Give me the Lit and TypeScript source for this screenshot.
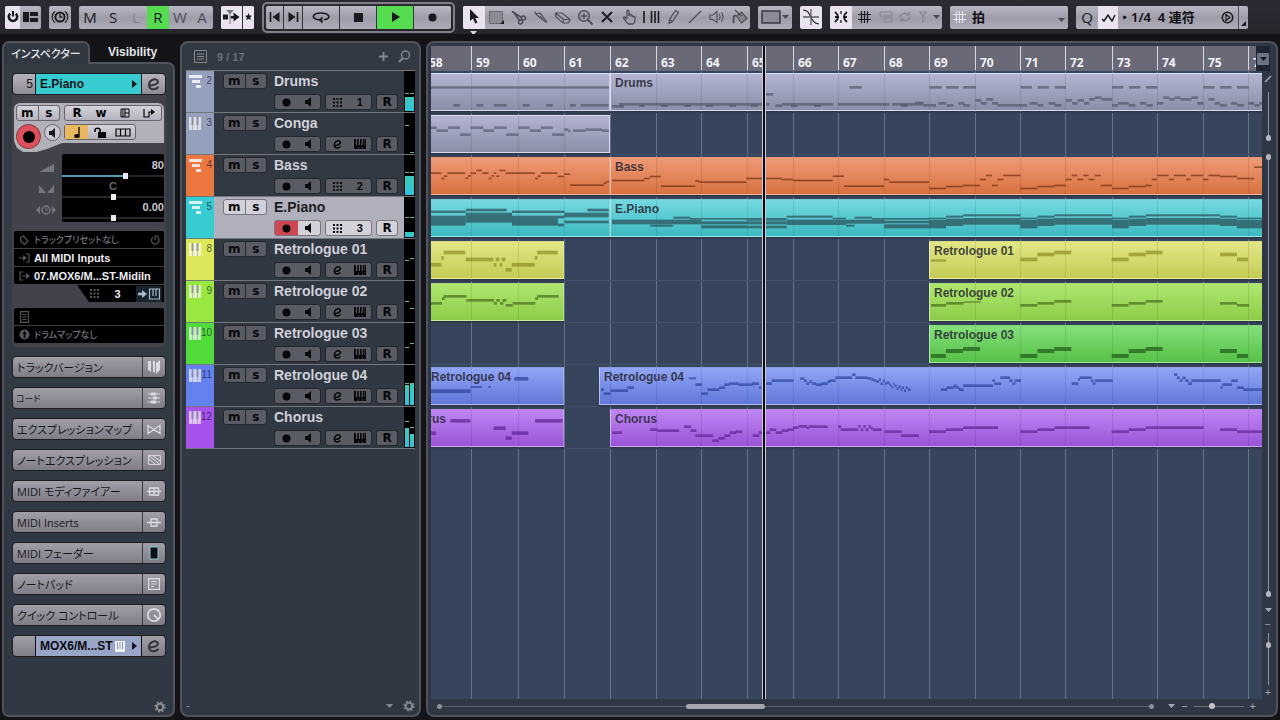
import { LitElement, html, svg, css, nothing } from "lit";
import { customElement } from "lit/decorators.js";
import { classMap } from "lit/directives/class-map.js";

/* ---------- icons ---------- */

const icon = (w: number, h: number, body: unknown) =>
  html`<svg width=${w} height=${h} viewBox="0 0 ${w} ${h}" aria-hidden="true">${body}</svg>`;

const line = (d: string, sw = 1.5, color = "currentColor") =>
  svg`<path d=${d} fill="none" stroke=${color} stroke-width=${sw} />`;
const solid = (d: string, color = "currentColor") => svg`<path d=${d} fill=${color} />`;

const icons = {
  power: icon(14, 14, [line("M4.2 3.6a4.2 4.2 0 1 0 5.600 0", 2.6), line("M7 1v5.500", 2.2)]),
  layout: icon(16, 12, [solid("M0 1h6v10H0zM7 1h8v4H7zM7 7h8v4H7z")]),
  clock: icon(18, 16, [
    svg`<circle cx="9" cy="8" r="4.600" fill="none" stroke="currentColor" stroke-width="2"/>`,
    line("M9 5v3h2.4", 1.3),
    line("M4 2.2a7.5 7.5 0 0 0 0 11.6M14 2.2a7.5 7.5 0 0 1 0 11.6", 1.1),
  ]),
  autoScroll: icon(18, 16, [
    solid("M0 5.500h5v5H0zM7.500 7h3V3.500l6 4.500l-6 4.500V9.500h-3z"),
    solid("M3 1h8L7 5z", "#77757f"),
    line("M7 2v13", 1, "#77757f"),
  ]),
  star: icon(7, 8, [solid("M3.500 0l1 2.600 2.500.2-1.900 1.700.7 2.700-2.300-1.500-2.300 1.500.7-2.700L0 2.800l2.500-.2z")]),
  prev: icon(12, 10, [line("M1.500 0v10", 1.6), solid("M10.500 0v10L3.500 5z")]),
  next: icon(12, 10, [line("M10.500 0v10", 1.6), solid("M1.500 0v10L8.500 5z")]),
  cycle: icon(18, 13, [line("M7 8.800C-1.500 8 0 2 9 2s10.500 6 3 6.800", 1.6), solid("M10.500 5.500v7L6 9z")]),
  stop: icon(9, 9, [solid("M0 0h9v9H0z")]),
  play: icon(9, 10, [solid("M1 0l8 5-8 5z")]),
  record: icon(9, 9, [svg`<circle cx="4.500" cy="4.500" r="4" fill="currentColor"/>`]),
  arrow: icon(12, 16, [solid("M2 0v12l3-2.500 2.200 5L9.500 13.500 7.300 9H11z")]),
  range: icon(17, 15, [
    svg`<rect x="1.500" y="1.500" width="13" height="12" fill="#8b8a95" stroke="#55535d" stroke-dasharray="2 1"/>`,
    solid("M16 10v4h-4z"),
  ]),
  scissors: icon(16, 16, [
    line("M1 2.500l9.500 6M2 2.500l6.500 9", 1.5),
    svg`<circle cx="12.500" cy="9" r="2" fill="none" stroke="currentColor" stroke-width="1.400"/>`,
    svg`<circle cx="9.500" cy="13" r="2" fill="none" stroke="currentColor" stroke-width="1.400"/>`,
  ]),
  glue: icon(16, 16, [line("M1.500 2.500l2 3.500M4 4.500l3-.5 7 9.500-4-2.500-6-5z", 1.2), line("M7 7l3.500 4", 1)]),
  eraser: icon(18, 15, [line("M1.500 3h6.500l8 6.500-1.500 3.500H9L1.500 6.500zM1.500 3l8 6.500 6.500 0M9.500 9.500L9 13", 1.1)]),
  zoom: icon(17, 17, [
    svg`<circle cx="7" cy="7" r="5.200" fill="none" stroke="currentColor" stroke-width="1.500"/>`,
    line("M4 7h6M7 4v6", 1.3),
    line("M11 11l4.500 4.500", 2),
  ]),
  mute: icon(14, 14, [line("M2 2l10 10M12 2L2 12", 1.8)]),
  hand: icon(15, 16, [
    line("M5 9V2.200c0-1.500 2-1.500 2 0V7M7 7V5.500c1-1 2-.5 2 .5v1.500M9 7c1-1 2-.5 2 .5v1M11 8c1-1 2.200-.5 2.200.5 0 3-.700 6-2.200 6.500H6.500C5 14 3.500 11.500 1.500 9c0-1.500 1.500-1.500 3.500 1", 1.3),
  ]),
  warp: icon(18, 14, [line("M2 1v12M9.500 1v12M13 1v12M16.500 1v12", 1.6)]),
  pencil: icon(13, 16, [line("M2 14.500l.5-4L8.500 1.500l3 1.800L5.500 12.500zM2.500 10.500l3 2", 1.2)]),
  lineTool: icon(14, 14, [line("M1 13L13 1", 1.3)]),
  speakerWave: icon(16, 14, [
    line("M1 5h3l4-3.500v11L4 9.500H1z", 1.1),
    line("M10 4c1.500 2 1.500 4 0 6M12.500 2.500c2 3 2 6 0 9", 1.1),
  ]),
  bucket: icon(17, 16, [
    solid("M6 7l5-4 5 6-5 5z", "#85838e"),
    line("M5.500 7L10.500 3l5.500 6.500-5.500 4.500zM4 1l6.500 6", 1.2),
    solid("M2 7c3-3 4-1 1.500 2v5c-1 1-2 0-2-1z"),
  ]),
  swatch: icon(20, 14, [svg`<rect x="1" y="1" width="18" height="12" fill="#8b8a96" stroke="#35343d" stroke-width="1.400"/>`]),
  caret: icon(7, 5, [solid("M0 0h7L3.500 4z")]),
  crossfade: icon(18, 18, [line("M1 2c9 0 6 13 16 14", 1.1), line("M1 9h16", 1), line("M9 1v16", 1.4, "#67656f")]),
  snap: icon(16, 14, [line("M2 2c4 3 4 7 0 10M14 2c-4 3-4 7 0 10M2 7h4M10 7h4", 1.9), line("M8 1v3M8 10v3", 1.3)]),
  hash: icon(13, 12, [line("M3.500 0v12M6.500 0v12M9.500 0v12M0 3.500h13M0 8.500h13", 1.2)]),
  gridRel: icon(14, 12, [line("M1 1h12v4H1zM5 7h8v4H5z", 1)]),
  loop: icon(14, 12, [line("M2 6a5 4 0 0 1 9-2M12 6a5 4 0 0 1-9 2M11 1v3H8M3 11V8h3", 1.1)]),
  pin: icon(10, 12, [line("M1 1h8M2 1l3 4 3-4M5 5v7", 1.2)]),
  wave: icon(15, 9, [line("M1 6l2 2 4-6 4 6 3-6", 1.5)]),
  go: icon(13, 13, [
    svg`<circle cx="6.500" cy="6.500" r="5.200" fill="none" stroke="currentColor" stroke-width="1.500"/>`,
    line("M5 3.500l4 3-4 3z", 1.2),
  ]),
  corner: icon(5, 5, [solid("M5 0v5H0z")]),
  list: icon(13, 13, [line("M.5.5h12v12H.5zM3 4h7M3 6.500h7M3 9h7", 1)]),
  plus: icon(9, 9, [line("M4.500 0v9M0 4.500h9", 1.8)]),
  search: icon(13, 13, [svg`<circle cx="7.500" cy="5" r="4" fill="none" stroke="currentColor" stroke-width="1.500"/>`, line("M5 8l-4 4", 2)]),
  gear: icon(12, 12, [
    svg`<circle cx="6" cy="6" r="3.200" fill="none" stroke="currentColor" stroke-width="2"/>`,
    svg`<circle cx="6" cy="6" r="4.800" fill="none" stroke="currentColor" stroke-width="1.600" stroke-dasharray="1.885 1.885"/>`,
  ]),
  midi: icon(14, 14, [svg`<path d="M0 0h13v3H0zM3 5h8v3H3zM7 10h5v3H7z" fill="#fff" fill-opacity=".8"/>`]),
  keys: icon(12, 14, [
    svg`<path d="M0 0h12v13H0z" fill="#fff" fill-opacity=".66"/>`,
    svg`<path d="M2.500 0h2v8h-2zM7.500 0h2v8h-2zM3.500 8h.6v5h-.6zM8.300 8h.6v5h-.6z" fill="#5d5a78" fill-opacity=".6"/>`,
  ]),
  whiteKeys: icon(10, 11, [
    solid("M0 0h10v11H0z", "#f2f3f8"),
    solid("M2 1h1v7H2zM4.500 1h1v7h-1zM7 1h1v7H7z", "#8c96b0"),
  ]),
  speaker: icon(8, 10, [solid("M0 3h2.500L6 0v10L2.500 7H0z")]),
  dots: icon(9, 9, [solid("M0 0h2v2H0zM3.500 0h2v2h-2zM7 0h2v2H7zM0 3.500h2v2H0zM3.500 3.500h2v2h-2zM7 3.500h2v2H7zM0 7h2v2H0zM3.500 7h2v2h-2zM7 7h2v2H7z")]),
  miniKeys: icon(12, 10, [solid("M0 0h2v6h1.200v-6h1.600v6H6v-6h1.600v6h1.200v-6H10v6h.5v-6H12v10H8.800V8h-.6v2H4.600V8H4v2H0z")]),
  edit: icon(14, 14, [line("M3 8.500C10 8 12 5.500 10.500 3.500 8 .5 2 3.500 2 8c0 5 6 5.500 9.500 2", 2)]),
  editSmall: icon(9, 10, [line("M2 6.500C7 6 8 4 7 2.500 5 .5 1.300 3 1.300 6c0 3.500 4 3.800 6.200 1.500", 1.5)]),
  arrowRight: icon(5, 8, [solid("M0 0l5 4-5 4z")]),
  lanes: icon(10, 10, [line("M1 1h8v8H1zM5 1v8M5 5h4M3 1v8", 1)]),
  out: icon(12, 11, [line("M1 1v8h5V4h4", 1.2), solid("M8 1l4 3-4 3z")]),
  note: icon(8, 13, [line("M6 1v8", 1.3), svg`<ellipse cx="4" cy="10" rx="2.800" ry="2" fill="currentColor"/>`]),
  unlock: icon(14, 11, [solid("M5 5h8v6H5z"), line("M7 5V3c0-2-5-3-5 .5V5", 1.6)]),
  cells: icon(16, 9, [line("M1 1h14v7H1zM5.500 1v7M10.500 1v7", 1.2)]),
  ramp: icon(15, 8, [solid("M0 8L15 0v8z")]),
  pan: icon(15, 8, [solid("M0 0l7 8H0zM15 0v8H8z")]),
  delay: icon(20, 12, [
    solid("M4 2v8L0 6zM16 2v8l4-4z"),
    svg`<circle cx="10" cy="6" r="4" fill="none" stroke="currentColor" stroke-width="1.500"/>`,
    line("M10 3v3h2.500", 1),
  ]),
  tag: icon(10, 10, [line("M4.500 1L9 6 5.500 9.500 1.500 6V2.500z", 1.2)]),
  reset: icon(10, 10, [line("M3 2.200a3.800 3.800 0 1 0 4.500 0M5 5V1h4", 1.2)]),
  inPort: icon(11, 10, [line("M0 5h6M7 1h3v8H7", 1.2), solid("M4 2l4 3-4 3z")]),
  outPort: icon(11, 10, [line("M4 1H1v8h3M3 5h5", 1.2), solid("M7 2l4 3-4 3z")]),
  doc: icon(9, 12, [line("M.6.6h7.800v10.800H.6zM2.500 3.500h4M2.500 6h4M2.500 8.500h4", 1.1)]),
  drum: icon(11, 11, [svg`<circle cx="5.500" cy="5.500" r="5" fill="currentColor"/>`, line("M5.500 3v6", 1.6, "#000"), solid("M3.500 5l2-3 2 3z", "#000")]),
  gotoKeys: icon(22, 12, [
    line("M0 6h5", 2.4),
    solid("M4 2l5 4-5 4z"),
    line("M11.500 1h10v10h-10zM15 1v7M18 1v7", 1.2),
  ]),
  versions: icon(14, 14, [solid("M1 1h3v11l-3-2zM6 1h2v12L6 12zM9 3l4-3v10l-4 4z")]),
  chords: icon(12, 12, [line("M0 2h12M0 6h12M0 10h12", 1), solid("M3 .5h5v3H3zM5 4.500h4v3H5zM3 8.500h5v3H3z")]),
  express: icon(14, 11, [line("M1 1.500l6 4-6 4zM13 1.500v8l-6-4z", 1.3)]),
  noteExp: icon(13, 10, [line("M.6.6h11.800v8.800H.6zM.6.6l11 8.500M5 1l7 5M1 4l6 5", 1)]),
  modifier: icon(14, 9, [line("M0 4.500h14M2.500 1h9v7h-9zM7 1v7", 1.3)]),
  insert: icon(14, 9, [line("M0 4.500h14M4 1h6v7H4z", 1.3)]),
  fader: icon(10, 14, [svg`<rect x="1" y="1" width="8" height="12" fill="#0a1016" stroke="#8fc5d6" stroke-width="1"/>`]),
  pad: icon(12, 12, [line("M.6.6h10.800v10.800H.6zM3 3.500h6M3 6h6M3 8.500h3", 1.2)]),
  knob: icon(16, 16, [svg`<circle cx="8" cy="8" r="6.200" fill="none" stroke="currentColor" stroke-width="1.800"/>`, line("M8 8l4 4", 1.8)]),
  slash: icon(8, 8, [line("M1 7l6-6", 1.4)]),
};

/* ---------- arrangement data ---------- */

interface Clip { from: number; to?: number; label?: string; selected?: boolean }
interface Phrase { x: number; y: number; h: number; notes: string }
interface Track {
  no: number; name: string; color: string; top: string; bottom: string; ink: string;
  kind: "midi" | "keys"; channel?: number; armed?: boolean; clips: Clip[]; phrases: Phrase[];
  meter: number[]; peak: number[];
}

/* Notes are written as start-end@pitch, with an optional *height, on a grid of three steps per pixel. */
const STEPS = 3;
const A = -15;
const B = 1245;

const steps = (starts: number[], a: number, b: number, c: number) =>
  starts.map((s) => `${s}-${s + 51}@${a} ${s + 51}-${s + 102}@${b} ${s + 102}-${s + 153}@${c}`).join(" ");

const BAR_X = [40, 87, 133, 179, 225, 270, 316, 362, 407, 453, 498, 544, 589, 634, 681, 726, 772, 817];

const tracks: Track[] = [
  {
    no: 2, name: "Drums", color: "#95a0bd", top: "#b3b4d0", bottom: "#8990a8", ink: "rgba(74,80,98,.62)", kind: "midi", channel: 1,
    clips: [{ from: -60, to: 179, selected: true }, { from: 179, label: "Drums", selected: true }],
    meter: [14], peak: [18, 18],
    phrases: [
      { x: A, y: 15, h: 8, notes: "15-548@61*7 82-102@114 151-172@114 203-242@114 290-311@114 361-380@114 432-449@114 464-548@114 558-594@117 580-1030@111 640-656@117*6 705-725@117*6 775-795@117*6 840-860@117*6 910-930@117*6 975-995@117*6 1018-1042@81 1048-1068@115 1068-1222@111 1095-1115@117*6 1165-1185@117*6 1235-1260@111" },
      { x: B, y: 15, h: 8, notes: "10-47@60 250-287@60 300-338@60 351-390@60 524-558@60 575-609@60 626-660@60 798-832@60 849-883@60 900-934@60 1072-1106@60 1122-1157@60 1173-1208@60 0-131@111 138-232@111 165-185@115 207-234@107*5 232-270@114 277-300@108 302-322@114 337-355@108 352-372@114 388-406@99 404-422@108 421-441@96 438-456@108 455-543@114 550-575@108 575-592@114 608-628@108 626-646@114 659-678@99 678-695@108 695-714@99 714-729@108 729-747@96 747-767@91 767-798@96 798-816@114 816-848@108 848-868@114 882-900@108 901-920@114 934-952@108 952-970@91 970-986@96 986-1003@91 1003-1036@96 1036-1056@91 1054-1073@108 1087-1106@96 1106-1122@108 1122-1142@114 1155-1174@108 1174-1194@114 1207-1225@108 1225-1240@114 1240-1248@108" },
    ],
  },
  {
    no: 3, name: "Conga", color: "#95a0bd", top: "#b3b4d0", bottom: "#8990a8", ink: "rgba(74,80,98,.58)", kind: "keys",
    clips: [{ from: -60, to: 179, selected: true }], meter: [], peak: [28, 1],
    phrases: [
      { x: A, y: 141, h: 8, notes: "15-32@181 32-66@190 66-102@181 102-134@202 134-172@181 172-204@190 204-242@181 240-277@202 277-311@181 311-345@190 345-380@181 378-415@202 415-427@187 427-434@191 441-478@190 478-528@187 528-548@190" },
    ],
  },
  {
    no: 4, name: "Bass", color: "#ec7740", top: "#ef9a77", bottom: "#d8713f", ink: "rgba(116,50,20,.72)", kind: "midi", channel: 2,
    clips: [{ from: -60, to: 179 }, { from: 179, label: "Bass" }], meter: [19], peak: [23, 23],
    phrases: [
      { x: A, y: 267, h: 5, notes: "15-46@319 47-55@335 54-64@328 64-118@319 119-127@334 126-135@327 134-150@319 151-168@311 169-188@319 188-196@335 196-204@327 203-211@319 211-220@328 220-238@311 239-327@319 327-336@335 335-345@328 345-394@319 395-414@329 414-432@322 432-534@355 533-542@349 541-549@344 558-655@341 654-672@335 671-705@329 705-808@358 808-818@342 817-826@345 826-961@346 961-1067@335 1066-1100@338 1100-1220@341 1220-1254@328 1254-1260@358" },
      { x: B, y: 267, h: 5, notes: "0-114@358 114-129@338 129-249@346 249-300@365 300-351@359 351-402@356 402-420@338 420-438@326 438-455@356 454-472@338 471-523@326 523-574@365 574-625@359 625-659@356 659-677@338 677-694@326 694-712@338 712-728@326 728-746@338 746-764@326 764-798@356 798-848@365 848-899@359 898-917@356 917-933@338 933-968@326 968-984@338 984-1020@326 1020-1034@338 1034-1071@326 1071-1087@338 1087-1122@326 1122-1173@329 1173-1225@335 1225-1248@301" },
    ],
  },
  {
    no: 5, name: "E.Piano", color: "#35cbd1", top: "#74d9e1", bottom: "#3db9c0", ink: "rgba(42,76,84,.7)", kind: "midi", channel: 3, armed: true,
    clips: [{ from: -60, to: 179 }, { from: 179, label: "E.Piano" }], meter: [5], peak: [20, 20],
    phrases: [
      { x: A, y: 393, h: 6, notes: "15-119@434*7 15-119@449*30 120-242@428*8 119-258@440*30 258-415@434*7 258-396@449*30 396-415@449*8 396-414@473*8 415-486@440*14 484-548@428*8 486-548@440*14 415-548@464*8 558-826@461*14 742-793@452 792-826@456*5 673-741@476 826-961@456*5 826-1082@466*9 826-961@478*9 961-1082@456*8 961-1082@479*8 1082-1220@449 1082-1260@461*16 1220-1260@455*5" },
      { x: B, y: 393, h: 6, notes: "0-114@461*12 0-26@476 26-78@452 78-114@456*5 114-249@456*5 114-249@464*8 114-249@475*12 249-300@455*5 249-300@462*25 300-351@449 300-351@458*22 351-523@445 351-523@456*20 523-574@455*5 523-574@462*25 574-625@449 574-625@458*22 625-798@445 625-798@456*20 798-848@455*5 798-848@462*25 848-900@449 848-900@458*22 900-1122@445 900-1122@456*20 1122-1173@449 1122-1173@458*22 1173-1248@455*5 1173-1248@462*25" },
    ],
  },
  {
    no: 8, name: "Retrologue 01", color: "#dce85a", top: "#e2e785", bottom: "#c5cc55", ink: "rgba(132,132,28,.62)", kind: "keys",
    clips: [{ from: -60, to: 133 }, { from: 498, label: "Retrologue 01" }], meter: [], peak: [19, 21],
    phrases: [
      { x: A, y: 9, h: 11, notes: "15-46@81 46-54@60 53-118@44 119-202@65 203-211@81 209-220@65 221-229@81 227-238@65 239-257@96 257-326@81 326-334@60 333-395@44" },
      { x: B, y: 9, h: 11, notes: "255-300@70*7 " + steps([523, 797], 65, 50, 44) + " 1122-1173@50 1173-1206@65" },
    ],
  },
  {
    no: 9, name: "Retrologue 02", color: "#9ae740", top: "#afe670", bottom: "#8dcd47", ink: "rgba(76,116,34,.75)", kind: "keys",
    clips: [{ from: -60, to: 133 }, { from: 498, label: "Retrologue 02" }], meter: [], peak: [20, 13],
    phrases: [
      { x: A, y: 135, h: 8, notes: "15-48@198 48-56@184 53-121@177 121-204@189 203-213@198 211-222@189 222-232@198 229-241@189 239-260@204 260-328@198 327-336@184 333-398@177" },
      { x: B, y: 135, h: 8, notes: "255-300@204 300-353@198 353-405@196*4 " + steps([523, 797], 204, 198, 192) + " 1122-1173@198 1173-1209@204" },
    ],
  },
  {
    no: 10, name: "Retrologue 03", color: "#52dc3c", top: "#84e07b", bottom: "#56c147", ink: "rgba(40,104,32,.8)", kind: "keys",
    clips: [{ from: 498, label: "Retrologue 03" }], meter: [], peak: [16, 20],
    phrases: [
      { x: B, y: 261, h: 12, notes: "255-300@354 300-351@339 351-402@333 " + steps([523, 797], 354, 339, 333) + " 1122-1173@339 1173-1206@354" },
    ],
  },
  {
    no: 11, name: "Retrologue 04", color: "#6381ef", top: "#91a5f5", bottom: "#6177d8", ink: "rgba(46,70,158,.72)", kind: "keys",
    clips: [{ from: -5, to: 133, label: "Retrologue 04" }, { from: 168, label: "Retrologue 04" }], meter: [20, 21], peak: [22, 22],
    phrases: [
      { x: A, y: 387, h: 8, notes: "15-134@460*11 134-168@450*6 187-194@450*6 265-307@423*11 525-534@457 533-553@469 553-606@460 604-624@451 788-810@424*6 808-828@442 826-846@469 844-880@457 879-897@451 895-910@442 909-937@439 937-980@442 978-999@439 999-1006@451 1009-1038@439 1037-1102@430 1123-1135@424 1134-1142@430 1141-1150@439 1150-1158@433 1158-1170@439 1169-1188@442 1187-1205@439 1204-1212@433 1211-1229@430 1228-1260@421" },
      { x: B, y: 387, h: 8, notes: "0-18@421 18-29@412 28-64@421 64-76@423 76-84@427 84-92@430 92-99@433 99-105@427 104-112@439 112-117@430 117-122@439 122-130@436 130-136@442 136-142@450 142-146@440 146-152@446 152-158@454 158-164@448 164-169@457 169-174@451 174-180@460 180-186@451 186-194@457 285-303@457 302-325@451 323-333@446 331-340@451 339-353@457 351-441@445 439-447@430 445-465@439 463-492@421 490-500@430 499-508@439 506-525@430 677-697@439 696-702@427 701-737@421 735-743@430 740-748@439 747-800@430 984-994@412 993-1001@421 1001-1009@430 1009-1019@422 1018-1028@430 1026-1038@439 1036-1124@430 1123-1130@451 1129-1158@442 1156-1175@430 1173-1194@451 1192-1248@457" },
    ],
  },
  {
    no: 12, name: "Chorus", color: "#a553ec", top: "#bf85f4", bottom: "#9a54d6", ink: "rgba(96,36,148,.7)", kind: "keys",
    clips: [{ from: -32, to: 133, label: "Chorus" }, { from: 179, label: "Chorus" }], meter: [19, 13], peak: [26, 20],
    phrases: [
      { x: A, y: 513, h: 11, notes: "15-30@586 73-133@549 203-239@571 239-257@601 257-307@586 327-410@549" },
      { x: A, y: 513, h: 8, notes: "558-588@586 672-694@577 694-759@580 774-795@568 793-811@580 808-861@595 859-879@610 877-897@603 895-913@595 911-931@586 929-949@583 980-1000@595 998-1012@586 1012-1033@586 1031-1051@577 1049-1069@586 1067-1087@580 1085-1103@577 1101-1118@571 1118-1142@567 1142-1150@571 1150-1158@567 1158-1205@568 1236-1246@568 1244-1260@577" },
      { x: B, y: 513, h: 8, notes: "0-37@577 37-44@567 44-52@577 52-59@567 59-67@577 67-74@567 74-80@573 80-107@577 115-167@583 165-219@595 249-300@583 300-351@577 351-456@571 523-574@583 574-626@577 626-731@571 797-848@583 848-899@577 899-1074@571 1122-1173@577 1173-1248@583" },
    ],
  },
];

const drawNotes = (p: Phrase) =>
  [...p.notes.matchAll(/(\d+)-(\d+)@(\d+)(?:\*(\d+))?/g)].map(
    ([, a, b, y, h]) =>
      svg`<rect x=${+a + p.x} y=${+y - p.y} width=${+b - +a} height=${h ? +h : p.h} />`,
  );

/* ---------- toolbar ---------- */

@customElement("daw-toolbar")
class DawToolbar extends LitElement {
  static styles = css`
    :host { display: flex; align-items: center; gap: 8px; height: 34px; padding: 0 5px; background: linear-gradient(#2c2b34, #26252c);
      font: 15px "Open Sans", "Noto Sans CJK JP", sans-serif; color: #1b1a20; overflow: hidden; }
    .group { display: flex; flex: none; height: 23px; border-radius: 2px; overflow: hidden; background: linear-gradient(#bab8c4, #9e9ca9 50%, #aeacb9); }
    button { display: flex; align-items: center; justify-content: center; padding: 0; border: 0; background: none; font: inherit; color: inherit; width: 22px; flex: none; }
    .w15 { width: 15px; } .w18 { width: 18px; } .w11 { width: 11px; } .w37 { width: 37px; }
    .w20 { width: 20px; } .w21 { width: 21px; } .w19 { width: 19px; } .w17 { width: 17px; } .w24 { width: 24px; }
    .on { background: #e8e3ee; }
    .go { background: #54db50; }
    .faint { color: #85838f; }
    .soft { color: #4e4c57; }
    .edge { border-right: 1px solid #33323a; }
    .transport { display: flex; flex: none; padding: 2px; border: 2px solid #7f7e88; border-radius: 5px; }
    .tools { position: relative; flex: none; }
    .marker { position: absolute; left: 7px; top: 25px; color: #dcd9e4; display: flex; }
    .tools .wide { width: 23px; }
    .select { align-items: center; gap: 6px; padding: 0 3px; box-sizing: border-box; }
    .select svg { flex: none; }
    select { appearance: none; border: 0; background: none; padding: 0; flex: 1; min-width: 0; font: 700 13px "Noto Sans", "Noto Sans CJK JP", sans-serif; color: #101014; }
    .grow1 { width: 118px; } .grow2 { width: 172px; padding: 0; gap: 0; }
    .grow2 select { font-weight: 600; }
    .grow2 button { height: 23px; }
    .light { color: #e6e2ec; line-height: 0; }
    .colorbox { width: 34px; padding: 0 3px; box-sizing: border-box; align-items: center; }
    .colorbox button { width: auto; gap: 1px; }
    .grow2 .tail { align-items: flex-end; padding-bottom: 3px; width: 10px; border-left: 1px solid #504e58; }
  `;
  render() {
    const b = (label: string, content: unknown, cls = "") =>
      html`<button class=${cls} aria-label=${label}>${content}</button>`;
    return html`
      <div class="group">${b("Activate project", icons.power, "on w15")}${b("Window layout", icons.layout, "w21")}</div>
      <div class="group">${b("Delay compensation", icons.clock)}</div>
      <div class="group">
        ${b("Mute", "M")}${b("Solo", "S", "w24")}${b("Listen", "L", "faint")}${b("Read", "R", "go")}${b("Write", "W", "soft")}${b("Automation", "A", "soft")}
      </div>
      <div class="group">${b("Auto-scroll", icons.autoScroll, "on edge")}${b("Suspend auto-scroll", icons.star, "on w11")}</div>
      <div class="transport"><div class="group">
        ${b("Previous", icons.prev, "w18 edge")}${b("Next", icons.next, "w19 edge")}${b("Cycle", icons.cycle, "w37 edge")}
        ${b("Stop", icons.stop, "w37 edge")}${b("Play", icons.play, "w37 edge go")}${b("Record", icons.record, "w37")}
      </div></div>
      <div class="tools">
        <div class="group">
          ${b("Select", icons.arrow, "on")}${b("Range", icons.range, "wide")}${b("Split", icons.scissors, "soft")}${b("Glue", icons.glue, "soft")}
          ${b("Erase", icons.eraser, "soft")}${b("Zoom", icons.zoom, "soft")}${b("Mute tool", icons.mute)}${b("Comp", icons.hand, "soft")}
          ${b("Time warp", icons.warp)}${b("Draw", icons.pencil, "soft")}${b("Line", icons.lineTool, "soft")}${b("Play tool", icons.speakerWave, "soft")}${b("Color tool", icons.bucket, "soft")}
        </div>
        <span class="marker">${icons.caret}</span>
      </div>
      <div class="group colorbox">${b("Color", html`${icons.swatch}${icons.caret}`, "soft")}</div>
      <div class="group">${b("Crossfade", icons.crossfade, "on")}</div>
      <div class="group">
        ${b("Snap", icons.snap, "on")}${b("Grid", icons.hash, "w24")}${b("Grid relative", icons.gridRel, "faint w19")}${b("Loop", icons.loop, "faint w19")}${b("Pin", icons.pin, "faint w17")}${b("More", icons.caret, "soft w11")}
      </div>
      <label class="group select grow1"><span class="light">${icons.hash}</span><select aria-label="Grid type"><option>拍</option></select><span class="soft">${icons.caret}</span></label>
      <div class="group select grow2">
        ${b("Apply quantize", "Q")}${b("Iterative", icons.wave, "on w20")}
        <select aria-label="Quantize preset"><option>・1/4&nbsp; 4 連符</option></select>
        ${b("Quantize panel", icons.go)}${b("Expand", icons.corner, "tail")}
      </div>`;
  }
}

/* ---------- inspector ---------- */

const sections: [string, unknown, boolean?][] = [
  ["トラックバージョン", icons.versions], ["コード", icons.chords, true], ["エクスプレッションマップ", icons.express],
  ["ノートエクスプレッション", icons.noteExp], ["MIDI モディファイアー", icons.modifier], ["MIDI Inserts", icons.insert],
  ["MIDI フェーダー", icons.fader], ["ノートパッド", icons.pad], ["クイック コントロール", icons.knob],
];

@customElement("daw-inspector")
class DawInspector extends LitElement {
  static styles = css`
    :host { display: flex; flex-direction: column; font: 12px "Open Sans", "Noto Sans CJK JP", sans-serif; color: #17171b; }
    button { font: inherit; color: inherit; border: 0; padding: 0; background: none; display: flex; align-items: center; justify-content: center; }
    .tabs { display: flex; height: 21px; }
    .tab { flex: 1; color: #e4e4ea; font: 700 12px "Liberation Sans", "Noto Sans CJK JP", sans-serif; }
    .tab.active { flex: 0 0 88px; box-sizing: border-box; border: 2px solid #50525c; border-bottom: 0; border-radius: 7px 7px 0 0; background: #323841; height: 23px; padding-bottom: 2px;
      font: 500 11px "Noto Sans CJK JP", sans-serif; font-feature-settings: "palt"; position: relative; z-index: 1; }
    .panel { flex: 1; display: flex; flex-direction: column; border: 2px solid #50525c; border-radius: 0 7px 7px 7px; background: linear-gradient(#343b43, #2f3843); padding: 9px 7px 2px 8px; }
    .bar { display: flex; height: 22px; flex: none; border: 1px solid #1d1d22; border-radius: 4px; overflow: hidden; background: linear-gradient(#a09fa8, #7f7e88); box-sizing: border-box; width: 100%; }
    .title { background: linear-gradient(#b5b4bc, #8e8d97); }
    .num { width: 22px; text-align: right; padding-right: 2px; box-sizing: border-box; font: 12px/20px "Liberation Sans", sans-serif; flex: none; }
    .name { flex: 1; background: #35cbd1; border: 1px solid #111; border-width: 0 1px; display: flex; align-items: center; justify-content: space-between; padding: 0 4px; font: 700 12px "Liberation Sans", sans-serif; }
    .name.out { background: #98a5c7; gap: 2px; }
    .name.out span { white-space: nowrap; color: #0b0b10; }
    .name svg { flex: none; }
    .name.out svg:last-child { margin-left: auto; }
    .edit { width: 23px; color: #34343a; flex: none; }
    .card { background: #42434a; border-radius: 0 0 5px 5px; padding: 8px 2px 4px; display: flex; flex-direction: column; flex: none; }
    .plate { background: #b2b1ba; border-radius: 6px; height: 49px; box-sizing: border-box; padding: 2px; display: grid; grid-template-columns: 44px 1fr; column-gap: 4px; align-content: start; row-gap: 3px;
      clip-path: polygon(0 0, 100% 0, 100% 40px, 32% 40px, 22% 46px, 15% 49px, 6% 49px, 2% 45px, 0 38px); }
    .keys { display: flex; height: 16px; box-sizing: border-box; border: 1px solid #66656e; border-radius: 3px; background: linear-gradient(#d4d3db, #b4b3bd); }
    .keys button { flex: 1; font: 700 12px "DejaVu Sans", sans-serif; color: #060608; }
    .keys button + button.split { border-left: 1px solid #66656e; }
    .short { width: 72px; }
    .keys .gold { background: #eab65e; }
    .round { display: flex; gap: 3px; align-items: flex-start; }
    .rec { width: 25px; height: 25px; border-radius: 50%; background: #df4f5c; border: 1px solid #7d3941; box-sizing: border-box; color: #000; flex: none; }
    .mon { width: 17px; height: 17px; border-radius: 50%; background: #c8c7d0; border: 1px solid #66656e; box-sizing: border-box; flex: none; }
    .faders { display: grid; grid-template-columns: 1fr 102px; margin-top: 2px; }
    .glyphs { display: flex; flex-direction: column; color: #76777e; align-items: flex-end; padding: 3px 6px 0 0; }
    .glyphs span { height: 21px; display: flex; align-items: center; justify-content: center; width: 20px; }
    .screen { background: #000; border-radius: 2px; padding: 4px 0 1px; }
    .screen label { display: block; height: 15px; text-align: right; font: 700 11px/15px "Liberation Sans", sans-serif; color: #c9c9cf; }
    .screen label.mid { text-align: center; color: #66666c; }
    input { appearance: none; display: block; width: 100%; height: 6px; margin: 0; background: linear-gradient(#26282b, #26282b) center / 100% 2px no-repeat; }
    input.vol { background: linear-gradient(90deg, #4f9cb8 62%, #26282b 62%) center / 100% 2px no-repeat; }
    input::-webkit-slider-thumb { appearance: none; width: 5px; height: 6px; background: #eeeef2; }
    .box { background: #000; border-radius: 2px; margin-top: 9px; }
    .line { display: grid; grid-template-columns: 20px 1fr auto; align-items: center; height: 17px; padding-right: 4px; color: #75757b; border-top: 1px solid #3f4046; font: 700 11px "Liberation Sans", "Noto Sans CJK JP", sans-serif; white-space: nowrap; }
    .line:first-child { border-top: 0; }
    .line svg { justify-self: center; color: #55565c; }
    .line.on { color: #ececf0; }
    .line .jp { font-size: 9px; font-weight: 500; font-feature-settings: "palt"; }
    .chan { align-self: flex-end; display: flex; align-items: center; justify-content: space-between; width: 87px; height: 17px; background: #000; clip-path: polygon(0 0, 100% 0, 100% 100%, 12px 100%);
      color: #ececf0; font: 700 11px "Liberation Sans", sans-serif; padding: 0 2px 0 13px; box-sizing: border-box; margin-top: 1px; }
    .chan .grid { color: #55565c; line-height: 0; } .chan .keyb { color: #a9bac6; background: #17242d; padding: 2px; line-height: 0; }
    .box.second { margin-top: 6px; }
    .sections { display: flex; flex-direction: column; gap: 9px; margin-top: 9px; }
    .label { flex: 1; justify-content: flex-start; padding-left: 4px; font: 11px "Open Sans", "Noto Sans CJK JP", sans-serif; font-feature-settings: "palt"; white-space: nowrap; }
    .label.small { font-size: 9px; padding-left: 3px; }
    .side { width: 23px; box-sizing: border-box; border-left: 1px solid #3c3b42; color: #dcdae4; flex: none; }
    .foot { margin-top: auto; display: flex; justify-content: flex-end; color: #8c8d95; }
  `;
  render() {
    return html`
      <div class="tabs" role="tablist">
        <button class="tab active" role="tab">インスペクター</button><button class="tab" role="tab">Visibility</button>
      </div>
      <div class="panel">
        <div class="bar title"><div class="num">5</div><div class="name">E.Piano ${icons.arrowRight}</div><button class="edit" aria-label="Edit instrument">${icons.edit}</button></div>
        <div class="card">
          <div class="plate">
            <div class="keys"><button>m</button><button class="split">s</button></div>
            <div class="keys"><button>R</button><button>w</button><button aria-label="Lanes">${icons.lanes}</button><button aria-label="Direct routing">${icons.out}</button></div>
            <div class="round"><button class="rec" aria-label="Record enable"><svg width="12" height="12" aria-hidden="true"><circle cx="6" cy="6" r="6"/></svg></button><button class="mon" aria-label="Monitor">${icons.speaker}</button></div>
            <div class="keys short"><button class="gold" aria-label="Musical timebase">${icons.note}</button><button aria-label="Lock">${icons.unlock}</button><button aria-label="Lane display">${icons.cells}</button></div>
          </div>
          <div class="faders">
            <div class="glyphs"><span>${icons.ramp}</span><span>${icons.pan}</span><span>${icons.delay}</span></div>
            <div class="screen">
              <label for="vol">80</label><input id="vol" class="vol" type="range" min="0" max="127" value="80" />
              <label for="pan" class="mid">C</label><input id="pan" type="range" min="-64" max="64" value="0" />
              <label for="delay">0.00</label><input id="delay" type="range" min="-100" max="100" value="0" />
            </div>
          </div>
          <div class="box">
            <div class="line">${icons.tag}<span class="jp">トラックプリセットなし</span>${icons.reset}</div>
            <div class="line on">${icons.inPort}<span>All MIDI Inputs</span></div>
            <div class="line on">${icons.outPort}<span>07.MOX6/M...ST-MidiIn</span></div>
          </div>
          <div class="chan"><span class="grid">${icons.dots}</span><span>3</span><span class="keyb">${icons.gotoKeys}</span></div>
          <div class="box second">
            <div class="line">${icons.doc}<span></span></div>
            <div class="line">${icons.drum}<span class="jp">ドラムマップなし</span></div>
          </div>
        </div>
        <div class="sections">
          ${sections.map(([t, i, small]) => html`<div class="bar"><button class=${classMap({ label: true, small: !!small })}>${t}</button><button class="side" aria-label="${t} bypass">${i}</button></div>`)}
          <div class="bar"><div class="num"></div><div class="name out"><span>MOX6/M...ST</span>${icons.whiteKeys}${icons.arrowRight}</div><button class="edit" aria-label="Edit device">${icons.edit}</button></div>
        </div>
        <div class="foot"><button aria-label="Inspector setup">${icons.gear}</button></div>
      </div>`;
  }
}

/* ---------- track list ---------- */

@customElement("daw-tracks")
class DawTracks extends LitElement {
  static styles = css`
    :host { display: flex; flex-direction: column; box-sizing: border-box; border: 2px solid #50525c; border-radius: 8px; background: linear-gradient(#323943, #2f3742); padding: 0 4px 2px; color: #85878f; }
    button { font: inherit; color: inherit; border: 0; padding: 0; background: none; display: flex; align-items: center; justify-content: center; }
    header { display: flex; align-items: center; height: 27px; padding: 0 4px 0 8px; gap: 10px; font: 700 11px "Liberation Sans", sans-serif; }
    header .count { flex: 1; color: #6d7079; }
    .list { border-top: 1px solid #74767e; }
    .row { display: grid; grid-template-columns: 28px 1fr 11px; height: 42px; box-sizing: border-box; border-bottom: 1px solid #74767e; }
    .tag { display: flex; justify-content: space-between; padding: 4px 2px 0 3px; font: 10px "Liberation Sans", sans-serif; color: rgba(20, 20, 40, .7); }
    .main { display: grid; grid-template-columns: 44px 1fr; column-gap: 7px; row-gap: 5px; padding: 2px 0 0 9px; align-content: start; }
    .pair { display: flex; height: 16px; box-sizing: border-box; border: 1px solid #23262c; border-radius: 3px; background: #5a5c65; color: #08080a; }
    .pair button { flex: 1; font: 700 12px/12px "DejaVu Sans", sans-serif; }
    .pair .split { border-left: 1px solid #23262c; }
    .name { font: 700 14px/16px "Liberation Sans", sans-serif; color: #cfcfd8; white-space: nowrap; }
    .controls { grid-column: 2; display: flex; gap: 4px; }
    .controls .pair { width: 47px; } .controls .pair.read { width: 22px; }
    .pair .ch { font: 700 11px/12px "Liberation Sans", sans-serif; }
    .active .main { background: #b1b0bd; }
    .active .name { color: #1c1c22; }
    .active .pair { background: #d2d1da; border-color: #77757f; }
    .active .split { border-color: #77757f; }
    .armed { background: #cf4851; }
    .meter { background: #000; position: relative; display: flex; align-items: flex-end; gap: 1px; padding: 1px; }
    .meter i { flex: 1; background: linear-gradient(#3cc9b8, #2ec4dc); }
    .meter b { position: absolute; width: 4px; height: 1px; background: #6fb39b; }
    .meter b.p0 { left: 1px; } .meter b.p1 { right: 1px; }
    footer { margin-top: auto; display: flex; align-items: center; gap: 10px; font: 12px "Liberation Sans", sans-serif; height: 14px; }
    footer span { flex: 1; }
  `;
  render() {
    return html`
      <header>${icons.list}<span class="count">9 / 17</span><button aria-label="Add track">${icons.plus}</button><button aria-label="Find track">${icons.search}</button></header>
      <div class="list">
        ${tracks.map((t) => html`
          <div class=${classMap({ row: true, active: !!t.armed })}>
            <div class="tag" style="background:${t.color}">${t.kind === "midi" ? icons.midi : icons.keys}<span>${t.no}</span></div>
            <div class="main">
              <div class="pair"><button>m</button><button class="split">s</button></div>
              <div class="name">${t.name}</div>
              <div class="controls">
                <div class="pair"><button class=${classMap({ armed: !!t.armed })} aria-label="Record enable">${icons.record}</button><button aria-label="Monitor">${icons.speaker}</button></div>
                <div class="pair">${t.kind === "midi"
                  ? html`<button aria-label="Channel list">${icons.dots}</button><button class="ch">${t.channel}</button>`
                  : html`<button aria-label="Edit channel">${icons.editSmall}</button><button aria-label="Edit instrument">${icons.miniKeys}</button>`}</div>
                <div class="pair read"><button>R</button></div>
              </div>
            </div>
            <div class="meter">${t.meter.map((m) => html`<i style="height:${m}px"></i>`)}${t.peak.map((p, i) => html`<b class="p${i}" style="bottom:${p}px"></b>`)}</div>
          </div>`)}
      </div>
      <footer><span>-</span><button aria-label="Track height">${icons.caret}</button><button aria-label="Track controls setup">${icons.gear}</button></footer>`;
  }
}

/* ---------- arrangement ---------- */

@customElement("daw-arrange")
class DawArrange extends LitElement {
  static styles = css`
    :host { display: grid; grid-template-columns: 1fr 14px; grid-template-rows: 25px 1fr 16px; box-sizing: border-box; border: 2px solid #50525c; border-radius: 8px; background: #303744; padding: 3px 0 0 3px; min-width: 0; position: relative; color: #a5a7b0; }
    button { border: 0; padding: 0; background: none; color: inherit; display: flex; align-items: center; justify-content: center; }
    .ruler { display: flex; background: #696977; overflow: hidden; margin-right: 6px; font: 700 12px/16px "Noto Sans", sans-serif; color: #f2f2f6; }
    .bar { flex: none; box-sizing: border-box; border-left: 1px solid #d9d9e2; padding: 9px 0 0 4px; height: 24px; overflow: hidden; }
    .bar.first { border: 0; padding-left: 0; text-indent: -2px; }
    .menu { width: 12px; height: 12px; background: #6b7285; color: #14181f; margin: 7px 0 0 -5px; border-radius: 1px; }
    .corner { background: #1c2531; margin: 0 6px 0 -6px; padding-left: 6px; }
    .canvas { position: relative; overflow: hidden; background: #36455b; min-width: 0; }
    .grid { position: absolute; inset: 0; width: 100%; height: 100%; }
    .lane { position: relative; height: 42px; box-sizing: border-box; border-bottom: 1px solid #40506a; }
    .clip { position: absolute; top: 2px; height: 38px; box-sizing: border-box; border: 1px solid rgba(255, 255, 255, .28); border-left-color: rgba(255, 255, 255, .5); padding: 0 0 0 4px; box-shadow: 0 2px 1px rgba(20, 25, 35, .35);
      font: 700 12px/18px "Liberation Sans", sans-serif; color: rgba(38, 38, 50, .85); white-space: nowrap; }
    .clip.tail { right: -1px; }
    .clip.selected { border-color: #d9daf0; }
    .notes { position: absolute; left: 0; top: 0; width: 100%; height: 42px; }
    .playhead { position: absolute; left: 334px; top: 3px; bottom: 16px; width: 2px; background: #0c0d12; border: 1px solid #d0c8d8; border-width: 0 1px; }
    .vscroll { display: flex; flex-direction: column; align-items: center; padding: 4px 2px 0 0; font: 10px/12px "Liberation Sans", sans-serif; }
    .vscroll button { flex: none; height: 5px; margin: 14px 0 6px; }
    .rail { width: 1px; background: #9294a0; position: relative; height: 46px; margin-top: 9px; flex: none; }
    .rail.long { flex: 1; margin-top: 18px; }
    .rail.small { height: 52px; margin: 2px 0; }
    .knob { position: absolute; left: -2px; width: 5px; height: 6px; border-radius: 3px; background: #b5b4c0; }
    .knob.top { top: -2px; } .knob.end { bottom: -3px; } .knob.mid { top: 9px; }
    .hscroll { grid-column: 1 / -1; display: flex; align-items: center; gap: 6px; padding: 0 20px 2px 6px; font: 11px "Liberation Sans", sans-serif; }
    .track { flex: 1; display: flex; align-items: center; height: 6px; background: linear-gradient(#5d606b, #5d606b) center / 100% 1px no-repeat; margin-right: 8px; }
    .track .end { width: 5px; height: 5px; border-radius: 50%; background: #8d8f99; }
    .track .end:last-child { margin-left: auto; }
    .thumb { width: 11%; height: 5px; border-radius: 3px; background: #a5a5b0; margin-left: 34%; }
    .zoom { appearance: none; width: 50px; height: 6px; margin: 0; background: linear-gradient(#6d707b, #6d707b) center / 100% 1px no-repeat; }
    .zoom::-webkit-slider-thumb { appearance: none; width: 6px; height: 6px; border-radius: 50%; background: #c3c2cc; }
  `;
  render() {
    const bars = [0, ...BAR_X];
    return html`
      <div class="ruler">
        ${bars.map((x, i) => html`<div class=${classMap({ bar: true, first: i === 0 })} style="width:${(bars[i + 1] ?? x + 46) - x}px">${58 + i}</div>`)}
      </div>
      <div class="corner"><button class="menu" aria-label="Ruler menu">${icons.caret}</button></div>
      <div class="canvas">
        <svg class="grid" aria-hidden="true">${BAR_X.map((x) => svg`<line x1=${x + 0.5} x2=${x + 0.5} y1="0" y2="100%" stroke="#64748b" stroke-width="1"/>`)}</svg>
        ${tracks.map((t) => html`
          <div class="lane">
            ${t.clips.map((c) => html`<div class=${classMap({ clip: true, tail: c.to === undefined, selected: !!c.selected })}
              style="left:${c.from}px;${c.to === undefined ? "" : `width:${c.to - c.from}px;`}background:linear-gradient(${t.top},${t.bottom})">${c.label ?? nothing}</div>`)}
            <svg class="notes" aria-hidden="true">
              ${BAR_X.map((x) => t.clips.some((c) => x > c.from && x < (c.to ?? 9999)) ? svg`<line x1=${x + 0.5} x2=${x + 0.5} y1="3" y2="39" stroke="#000" stroke-opacity=".1"/>` : nothing)}
              <g transform="scale(${1 / STEPS})" fill=${t.ink}>${t.phrases.map(drawNotes)}</g>
            </svg>
          </div>`)}
      </div>
      <div class="vscroll">
        ${icons.slash}
        <div class="rail"><span class="knob end"></span></div>
        <div class="rail long"><span class="knob top"></span><span class="knob end"></span></div>
        <button aria-label="Scroll down">${icons.caret}</button>
        <span>−</span>
        <div class="rail small"><span class="knob mid"></span></div>
        <span>+</span>
      </div>
      <div class="hscroll">
        <div class="track"><span class="end"></span><span class="thumb"></span><span class="end"></span></div>
        <button aria-label="Zoom presets">${icons.caret}</button><span>−</span>
        <input class="zoom" type="range" min="0" max="100" value="36" aria-label="Horizontal zoom" /><span>+</span>
      </div>
      <div class="playhead"></div>`;
  }
}

@customElement("app-root")
class AppRoot extends LitElement {
  static styles = css`
    :host { display: flex; flex-direction: column; height: 100vh; background: #131318; overflow: hidden; }
    main { flex: 1; display: grid; grid-template-columns: 173px 241px 1fr; column-gap: 5px; padding: 7px 2px 3px; min-height: 0; }
  `;
  render() {
    return html`<daw-toolbar></daw-toolbar>
      <main><daw-inspector></daw-inspector><daw-tracks></daw-tracks><daw-arrange></daw-arrange></main>`;
  }
}
